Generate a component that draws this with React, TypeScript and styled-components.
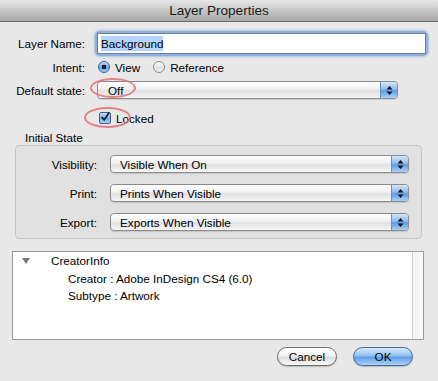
import React from "react";
import styled, { createGlobalStyle } from "styled-components";

const GlobalStyle = createGlobalStyle`
  html, body {
    margin: 0;
    padding: 0;
    background: #e8e8e8;
  }
  body {
    font-family: "Liberation Sans", Arial, sans-serif;
    font-size: 11.7px;
    color: #000;
  }
`;

const Dialog = styled.div`
  width: 438px;
  height: 381px;
  background: #e8e8e8;
  display: flex;
  flex-direction: column;
  overflow: hidden;
`;

const TitleBar = styled.div`
  height: 21px;
  flex: none;
  display: flex;
  align-items: center;
  justify-content: center;
  font-size: 13.6px;
  color: #1a1a1a;
  background: linear-gradient(#e6e6e6, #c4c4c4 55%, #a9a9a9);
  border-bottom: 1px solid #6d6d6d;
`;

const Body = styled.div`
  padding: 10px 14px 0 12px;
  display: flex;
  flex-direction: column;
`;

const Row = styled.div<{ $h: number; $mt?: number }>`
  display: grid;
  grid-template-columns: 73px 1fr;
  column-gap: 10px;
  align-items: center;
  height: ${(p) => p.$h}px;
  margin-top: ${(p) => p.$mt ?? 0}px;
`;

const Label = styled.div`
  text-align: right;
  white-space: nowrap;
`;

const FocusRing = styled.div`
  margin-right: -2px;
  height: 21px;
  border-radius: 3px;
  box-shadow: 0 0 0 2px #8fb0dc, 0 0 2px 3px rgba(120, 160, 220, 0.5);
  margin-left: 2px;
  display: flex;
`;

const TextField = styled.div`
  flex: 1;
  background: #fff;
  border: 1px solid #6e7f99;
  display: flex;
  align-items: center;
  padding-left: 3px;
`;

const Selected = styled.span`
  background: #b5d5ff;
  padding: 1px 0;
`;

const RadioGroup = styled.div`
  display: flex;
  align-items: center;
  gap: 13px;
  margin-left: 3px;
`;

const Option = styled.label`
  display: flex;
  align-items: center;
  gap: 5px;
`;

const Radio = styled.span<{ $on?: boolean }>`
  width: 12px;
  height: 12px;
  box-sizing: border-box;
  border-radius: 50%;
  border: 1px solid ${(p) => (p.$on ? "#3e5f8f" : "#8a8a8a")};
  background: ${(p) =>
    p.$on
      ? "radial-gradient(circle at 50% 50%, #10233f 0 2.2px, transparent 2.6px), linear-gradient(#c8def8, #6fa4e6 55%, #a8cff6)"
      : "linear-gradient(#fdfdfd, #e2e2e2 60%, #f5f5f5)"};
`;

const SelectWrap = styled.div<{ $ml: number; $w: number }>`
  position: relative;
  margin-left: ${(p) => p.$ml}px;
  width: ${(p) => p.$w}px;
`;

const SelectBox = styled.div`
  height: 18px;
  box-sizing: border-box;
  border: 1px solid #8a8a8a;
  border-radius: 4px;
  background: linear-gradient(#ffffff, #f0f0f0 45%, #e0e0e0 55%, #f7f7f7);
  display: flex;
  align-items: center;
  overflow: hidden;
  box-shadow: 0 1px 1px rgba(0, 0, 0, 0.12);
`;

const SelectText = styled.span<{ $pl: number }>`
  flex: 1;
  padding-left: ${(p) => p.$pl}px;
  white-space: nowrap;
`;

const Stepper = styled.span`
  width: 16px;
  align-self: stretch;
  border-left: 1px solid #6d8fc0;
  background: linear-gradient(#d5e7fb, #8fbcf0 45%, #5d9ae6 55%, #a9d1f8);
  display: flex;
  align-items: center;
  justify-content: center;
`;

const Annotation = styled.span<{ $l: number; $t: number; $w: number; $h: number }>`
  position: absolute;
  left: ${(p) => p.$l}px;
  top: ${(p) => p.$t}px;
  width: ${(p) => p.$w}px;
  height: ${(p) => p.$h}px;
  box-sizing: border-box;
  border: 2px solid rgba(226, 110, 118, 0.85);
  border-radius: 50%;
  pointer-events: none;
`;

const CheckOption = styled.label`
  position: relative;
  display: flex;
  align-items: center;
  gap: 5px;
  margin-left: 4px;
`;

const CheckBox = styled.span`
  width: 12px;
  height: 12px;
  box-sizing: border-box;
  border: 1px solid #3e5f8f;
  border-radius: 2px;
  background: linear-gradient(#c8def8, #7aaae8 55%, #a8cff6);
  display: flex;
  align-items: center;
  justify-content: center;
`;

const SectionTitle = styled.div`
  margin: 3px 0 0 13px;
  height: 14px;
  line-height: 14px;
`;

const GroupBox = styled.div`
  margin: 0 2px 0 3px;
  height: 94px;
  box-sizing: border-box;
  border: 1px solid #c4c4c4;
  border-radius: 4px;
  background: #e1e1e1;
  padding: 8px 12px 0 0;
  display: flex;
  flex-direction: column;
  gap: 9px;
`;

const GroupRow = styled.div`
  display: grid;
  grid-template-columns: 81px 1fr;
  column-gap: 13px;
  align-items: center;
  height: 20px;
`;

const ListBox = styled.div`
  margin-top: 12px;
  height: 89px;
  box-sizing: border-box;
  border: 1px solid #9a9a9a;
  background: #fff;
  display: flex;
`;

const ListBody = styled.div`
  flex: 1;
`;

const Gutter = styled.div`
  width: 10px;
  border-left: 1px solid #d0d0d0;
  background: linear-gradient(90deg, #f3f3f3, #fafafa);
`;

const TreeRow = styled.div<{ $indent: number }>`
  height: 17.5px;
  display: flex;
  align-items: center;
  padding-left: ${(p) => p.$indent}px;
  white-space: nowrap;
`;

const Disclosure = styled.span`
  width: 0;
  height: 0;
  border-left: 4px solid transparent;
  border-right: 4px solid transparent;
  border-top: 6px solid #7a7a7a;
  margin: 0 21px 0 9px;
`;

const ButtonBar = styled.div`
  display: flex;
  justify-content: flex-end;
  gap: 16px;
  margin-top: 7px;
  padding-right: 11px;
`;

const Button = styled.button<{ $primary?: boolean }>`
  font: inherit;
  font-size: 11.7px;
  height: 19px;
  width: 60px;
  border-radius: 10px;
  padding: 0;
  color: #000;
  border: 1px solid ${(p) => (p.$primary ? "#48689a" : "#6e6e6e")};
  background: ${(p) =>
    p.$primary
      ? "linear-gradient(#d9eafc, #93c0f2 45%, #5f9de8 55%, #acd4fa)"
      : "linear-gradient(#ffffff, #f2f2f2 45%, #dedede 55%, #f8f8f8)"};
  box-shadow: 0 1px 1px rgba(0, 0, 0, 0.2);
`;

const Arrows = () => (
  <svg width="7" height="11" viewBox="0 0 7 11">
    <path d="M3.5 1 L6.5 4.5 L0.5 4.5 Z" fill="#111" />
    <path d="M3.5 10 L6.5 6.5 L0.5 6.5 Z" fill="#111" />
  </svg>
);

const Check = () => (
  <svg width="12" height="12" viewBox="0 0 12 12" style={{ marginTop: -3 }}>
    <path d="M2 6 L5 9.5 L11 0.5" stroke="#0c1a2e" strokeWidth="2" fill="none" />
  </svg>
);

interface SelectProps {
  value: string;
  ml: number;
  w: number;
  pl?: number;
  children?: React.ReactNode;
}

const Select: React.FC<SelectProps> = ({ value, ml, w, pl = 9, children }) => (
  <SelectWrap $ml={ml} $w={w}>
    <SelectBox>
      <SelectText $pl={pl}>{value}</SelectText>
      <Stepper>
        <Arrows />
      </Stepper>
    </SelectBox>
    {children}
  </SelectWrap>
);

const groupRows = [
  { label: "Visibility:", value: "Visible When On" },
  { label: "Print:", value: "Prints When Visible" },
  { label: "Export:", value: "Exports When Visible" },
];

const App: React.FC = () => {
  return (
    <Dialog>
      <GlobalStyle />
      <TitleBar>Layer Properties</TitleBar>
      <Body>
        <Row $h={22}>
          <Label>Layer Name:</Label>
          <FocusRing>
            <TextField>
              <Selected>Background</Selected>
            </TextField>
          </FocusRing>
        </Row>
        <Row $h={20} $mt={3}>
          <Label>Intent:</Label>
          <RadioGroup>
            <Option>
              <Radio $on />
              View
            </Option>
            <Option>
              <Radio />
              Reference
            </Option>
          </RadioGroup>
        </Row>
        <Row $h={20} $mt={3}>
          <Label>Default state:</Label>
          <Select value="Off" ml={2} w={301} pl={10}>
            <Annotation $l={-7} $t={-3} $w={46} $h={20} />
          </Select>
        </Row>
        <Row $h={20} $mt={8}>
          <span />
          <CheckOption>
            <CheckBox>
              <Check />
            </CheckBox>
            Locked
            <Annotation $l={-15} $t={-5} $w={47} $h={21} />
          </CheckOption>
        </Row>
        <SectionTitle>Initial State</SectionTitle>
        <GroupBox>
          {groupRows.map((r) => (
            <GroupRow key={r.label}>
              <Label>{r.label}</Label>
              <Select value={r.value} ml={0} w={299} />
            </GroupRow>
          ))}
        </GroupBox>
        <ListBox>
          <ListBody>
            <TreeRow $indent={0}>
              <Disclosure />
              CreatorInfo
            </TreeRow>
            <TreeRow $indent={55}>Creator : Adobe InDesign CS4 (6.0)</TreeRow>
            <TreeRow $indent={55}>Subtype : Artwork</TreeRow>
          </ListBody>
          <Gutter />
        </ListBox>
        <ButtonBar>
          <Button>Cancel</Button>
          <Button $primary>OK</Button>
        </ButtonBar>
      </Body>
    </Dialog>
  );
};

export default App;
